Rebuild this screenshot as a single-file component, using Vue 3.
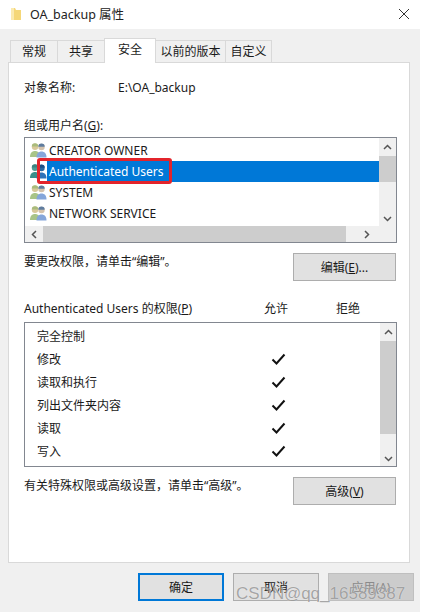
<script setup>
const users = [
  { name: 'CREATOR OWNER' },
  { name: 'Authenticated Users', selected: true },
  { name: 'SYSTEM' },
  { name: 'NETWORK SERVICE' },
]
const perms = [
  { name: '完全控制', allow: false },
  { name: '修改', allow: true },
  { name: '读取和执行', allow: true },
  { name: '列出文件夹内容', allow: true },
  { name: '读取', allow: true },
  { name: '写入', allow: true },
]
const tabs = ['常规', '共享', '安全', '以前的版本', '自定义']
</script>

<template>
  <div class="win">
    <header class="title">
      <svg class="folder" width="10" height="12" viewBox="0 0 10 12">
        <path d="M0 0h4l1 2h5v10H0z" fill="#f5d778" />
        <path d="M0 0h3v12H0z" fill="#fbeab0" />
      </svg>
      <span class="title-text">OA_backup 属性</span>
      <svg class="close" width="12" height="12" viewBox="0 0 12 12">
        <path d="M1 1l10 10M11 1L1 11" stroke="#333" stroke-width="1" fill="none" />
      </svg>
    </header>

    <div class="body">
      <nav class="tabs">
        <div v-for="(t, i) in tabs" :key="t" class="tab" :class="{ active: i === 2 }">{{ t }}</div>
      </nav>

      <main class="panel">
        <div class="object-row">
          <span class="object-label">对象名称:</span>
          <span>E:\OA_backup</span>
        </div>
        <div class="group-label">组或用户名(<u>G</u>):</div>

        <div class="list">
          <div class="list-main">
            <div class="rows">
              <div v-for="u in users" :key="u.name" class="user" :class="{ selected: u.selected }">
                <svg class="uicon" width="17" height="15" viewBox="0 0 17 15">
                  <circle cx="5" cy="3.8" r="3.2" :fill="u.selected ? '#4f9a94' : '#d8c99a'" />
                  <path d="M1.8 3.5a3.2 3.2 0 0 1 6.4 0z" :fill="u.selected ? '#3c8280' : '#a9bb7c'" />
                  <path d="M0 14c0-4 2-6 5-6s5 2 5 6z" :fill="u.selected ? '#3a8f8a' : '#a8c488'" />
                  <circle cx="11.5" cy="4" r="3.2" :fill="u.selected ? '#2a68a2' : '#d4c2ac'" />
                  <path d="M8.3 3.7a3.2 3.2 0 0 1 6.4 0z" :fill="u.selected ? '#1c4e84' : '#5f7c9f'" />
                  <path d="M6.5 14.5c0-4 2-6 5-6s5 2 5 6z" :fill="u.selected ? '#2f72b8' : '#85a6da'" />
                </svg>
                <span class="uname">{{ u.name }}</span>
              </div>
            </div>
            <div class="vbar">
              <svg width="9" height="6" viewBox="0 0 9 6"><path d="M1 5l3.5-3.5L8 5" class="arrow" /></svg>
              <div class="vtrack"><div class="vthumb thumb-a"></div></div>
              <svg width="9" height="6" viewBox="0 0 9 6"><path d="M1 1l3.5 3.5L8 1" class="arrow" /></svg>
            </div>
          </div>
          <div class="hbar">
            <svg width="6" height="9" viewBox="0 0 6 9"><path d="M5 1L1.5 4.5 5 8" class="arrow" /></svg>
            <div class="hthumb"></div>
            <svg width="6" height="9" viewBox="0 0 6 9"><path d="M1 1l3.5 3.5L1 8" class="arrow" /></svg>
          </div>
        </div>

        <div class="action-row first">
          <span class="hint">要更改权限&#xFF0C;请单击“编辑”。</span>
          <button class="btn">编辑(<u>E</u>)...</button>
        </div>

        <div class="perm-head">
          <span class="perm-title">Authenticated Users 的权限(<u>P</u>)</span>
          <span class="perm-col">允许</span>
          <span class="perm-col deny">拒绝</span>
        </div>

        <div class="perm-box">
          <div class="perm-rows">
            <div v-for="p in perms" :key="p.name" class="perm">
              <span class="perm-name">{{ p.name }}</span>
              <svg v-if="p.allow" width="15" height="12" viewBox="0 0 15 12">
                <path d="M1.5 6.5L5.5 10.5L13.5 1.5" fill="none" stroke="#111" stroke-width="2" />
              </svg>
            </div>
          </div>
          <div class="vbar pv">
            <svg width="9" height="6" viewBox="0 0 9 6"><path d="M1 5l3.5-3.5L8 5" class="arrow" /></svg>
            <div class="vtrack"><div class="vthumb thumb-b"></div></div>
            <svg width="9" height="6" viewBox="0 0 9 6"><path d="M1 1l3.5 3.5L8 1" class="arrow" /></svg>
          </div>
        </div>

        <div class="action-row second">
          <span class="hint">有关特殊权限或高级设置&#xFF0C;请单击“高级”。</span>
          <button class="btn">高级(<u>V</u>)</button>
        </div>
      </main>

      <footer class="foot">
        <button class="btn fb primary">确定</button>
        <button class="btn fb">取消</button>
        <button class="btn fb disabled">应用(A)</button>
      </footer>
    </div>

    <div class="redbox"></div>
    <div class="mark">CSDN @qq_16589387</div>
  </div>
</template>

<style scoped>
.win {
  position: relative;
  width: 422px;
  height: 612px;
  overflow: hidden;
  background: #f0f0f0;
  font-family: "Noto Sans", "Noto Sans CJK SC", sans-serif;
  font-size: 12px;
  color: #1a1a1a;
  border-right: 2px solid #fff;
  box-sizing: border-box;
}
.title {
  height: 29px;
  background: #fff;
  display: flex;
  align-items: center;
  padding: 0 9px 2px 11px;
  box-sizing: border-box;
}
.folder { margin-right: 9px; }
.title-text { flex: 1; font-size: 12.5px; color: #222; }
.close { margin-right: 1px; }
.body { padding: 0 0 0 8px; }
.tabs {
  display: flex;
  align-items: flex-end;
  height: 33px;
  padding-left: 2px;
}
.tab {
  height: 22px;
  padding: 1px 4px 0;
  box-sizing: border-box;
  background: #f0f0f0;
  border: 1px solid #d9d9d9;
  border-bottom: none;
  margin-right: -1px;
  display: flex;
  align-items: center;
  justify-content: center;
  line-height: 20px;
}
.tab:nth-child(1), .tab:nth-child(2) { width: 48px; }
.tab:nth-child(4) { width: 71px; }
.tab:nth-child(5) { width: 47px; }
.tab.active {
  height: 25px;
  width: 52px;
  background: #fff;
  position: relative;
  z-index: 1;
  padding: 0 0 3px;
  margin-bottom: -1px;
}
.panel {
  width: 402px;
  height: 501px;
  box-sizing: border-box;
  background: #fff;
  border: 1px solid #d9d9d9;
  padding: 16px 13px 0 15px;
}
.object-row { display: flex; height: 17px; line-height: 17px; }
.object-label { width: 94px; }
.group-label { margin-top: 21px; height: 18px; line-height: 17px; }
.list {
  margin-top: 2px;
  height: 106px;
  width: 373px;
  box-sizing: border-box;
  border: 1px solid #828790;
  display: flex;
  flex-direction: column;
}
.list-main { flex: 1; display: flex; min-height: 0; }
.rows { flex: 1; padding: 2px 0 0 5px; }
.user { display: flex; align-items: center; height: 21px; }
.uicon { flex: none; }
.uname { padding-left: 2px; font-size: 12px; line-height: 21px; flex: 1; }
.user.selected .uname { background: #0078d7; color: #fff; }
.vbar {
  width: 17px;
  flex: none;
  background: #f0f0f0;
  display: flex;
  flex-direction: column;
  align-items: center;
  padding: 6px 0 4px;
  box-sizing: border-box;
}
.pv { width: 16px; }
.vtrack { flex: 1; width: 100%; padding-top: 6px; box-sizing: border-box; }
.vthumb { background: #cdcdcd; width: 100%; }
.thumb-a { height: 26px; }
.thumb-b { height: 93px; }
.arrow { fill: none; stroke: #555; stroke-width: 1.5; }
.hbar {
  height: 16px;
  flex: none;
  background: #f0f0f0;
  display: flex;
  align-items: center;
  padding: 0 8px 0 6px;
}
.hthumb { width: 303px; height: 100%; margin: 0 18px 0 6px; background: #cdcdcd; }
.action-row { display: flex; justify-content: space-between; width: 373px; }
.action-row.first { margin-top: 10px; height: 29px; }
.action-row.second { margin-top: 10px; height: 28px; }
.hint { line-height: 17px; }
.btn {
  width: 103px;
  height: 28px;
  margin-right: 1px;
  background: #e1e1e1;
  border: 1px solid #adadad;
  font: inherit;
  color: #1a1a1a;
  padding: 0;
}
.perm-head { display: flex; margin-top: 18px; height: 20px; line-height: 17px; }
.perm-title { width: 240px; }
.perm-col { width: 72px; }
.perm-col.deny { width: auto; }
.perm-box {
  margin-top: 2px;
  height: 145px;
  width: 373px;
  box-sizing: border-box;
  border: 1px solid #828790;
  display: flex;
}
.perm-rows { flex: 1; padding: 1px 0 0 12px; }
.perm { display: flex; align-items: center; height: 23px; }
.perm-name { width: 234px; }
.foot {
  display: flex;
  gap: 9px;
  padding: 10px 0 0 130px;
}
.fb { width: 86px; margin: 0; height: 28px; }
.primary { border: 2px solid #0078d7; }
.disabled { background: #cccccc; border-color: #bfbfbf; color: #8a8a8a; }
.redbox {
  position: absolute;
  left: 37px;
  top: 158px;
  width: 135px;
  height: 26px;
  box-sizing: border-box;
  border: 3px solid #e3242b;
  border-radius: 3px;
}
.mark {
  position: absolute;
  left: 236px;
  top: 584px;
  font-family: "Liberation Sans", sans-serif;
  font-size: 17px;
  word-spacing: -5px;
  color: rgba(110, 110, 110, 0.6);
  text-shadow: 0 0 1px rgba(255, 255, 255, 0.8);
  white-space: nowrap;
}
</style>
